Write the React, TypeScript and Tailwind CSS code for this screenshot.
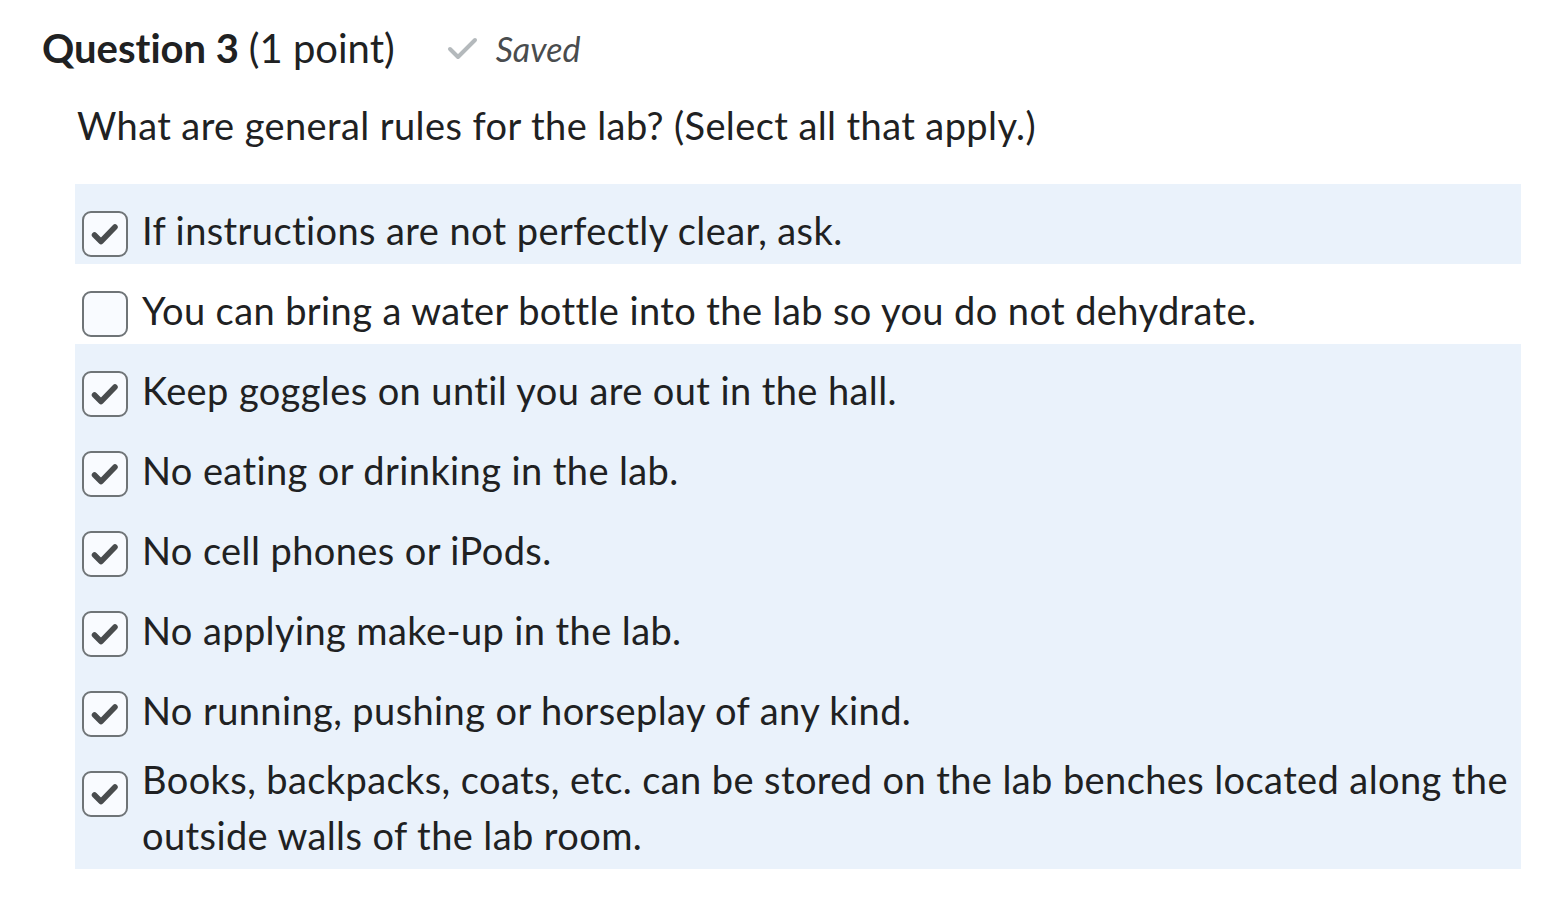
import React from "react";

const options: { text: string; checked: boolean; multi?: boolean }[] = [
  { text: "If instructions are not perfectly clear, ask.", checked: true },
  { text: "You can bring a water bottle into the lab so you do not dehydrate.", checked: false },
  { text: "Keep goggles on until you are out in the hall.", checked: true },
  { text: "No eating or drinking in the lab.", checked: true },
  { text: "No cell phones or iPods.", checked: true },
  { text: "No applying make-up in the lab.", checked: true },
  { text: "No running, pushing or horseplay of any kind.", checked: true },
  {
    text: "Books, backpacks, coats, etc. can be stored on the lab benches located along the outside walls of the lab room.",
    checked: true,
    multi: true,
  },
];

function Checkbox({ checked }: { checked: boolean }) {
  return (
    <div className="mt-[27px] ml-[7px] w-[46px] h-[46px] shrink-0 rounded-[9px] border-2 border-[#6f7477] bg-[#f9fbff] flex items-center justify-center">
      {checked && (
        <svg width="46" height="46" viewBox="0 0 46 46" className="-m-[2px]">
          <path d="M12.5 24 L19 30.5 L33 16" fill="none" stroke="#494c4e" strokeWidth="5.5" strokeLinecap="round" strokeLinejoin="round" />
        </svg>
      )}
    </div>
  );
}

export default function App() {
  return (
    <div
      className="min-h-[900px] bg-white text-[#202122] [font-variant-ligatures:none]"
      style={{ fontFamily: "Lato, 'Noto Sans', sans-serif" }}
    >
      <div className="pl-[42px] pt-[24px]">
        <div className="flex items-center h-[48px]">
          <h2 className="text-[40px] leading-[48px] font-bold">
            Question 3 <span className="font-normal">(1 point)</span>
          </h2>
          <div className="ml-[52px] flex items-center">
            <svg width="32" height="24" viewBox="0 0 32 24" className="mt-[2px]">
              <path d="M3 12 L11 20 L28 3" fill="none" stroke="#b4b9bc" strokeWidth="4" strokeLinecap="round" strokeLinejoin="round" />
            </svg>
            <span className="ml-[17px] text-[34px] italic text-[#494c4e]">Saved</span>
          </div>
        </div>
        <p className="ml-[35px] mt-[25px] text-[38px] leading-[56px] tracking-[0.4px]">
          What are general rules for the lab? (Select all that apply.)
        </p>
        <div className="ml-[33px] mt-[31px] w-[1446px]">
          {options.map((o, i) => (
            <div key={i} className={`flex items-start ${o.checked ? "bg-[#eaf2fb]" : "bg-white"}`}>
              <Checkbox checked={o.checked} />
              <div
                className={`ml-[14px] pr-[10px] text-[38px] leading-[56px] tracking-[0.4px] ${
                  o.multi ? "pt-[7px] pb-[6px]" : "pt-[18px] pb-[6px]"
                }`}
              >
                {o.text}
              </div>
            </div>
          ))}
        </div>
      </div>
    </div>
  );
}
